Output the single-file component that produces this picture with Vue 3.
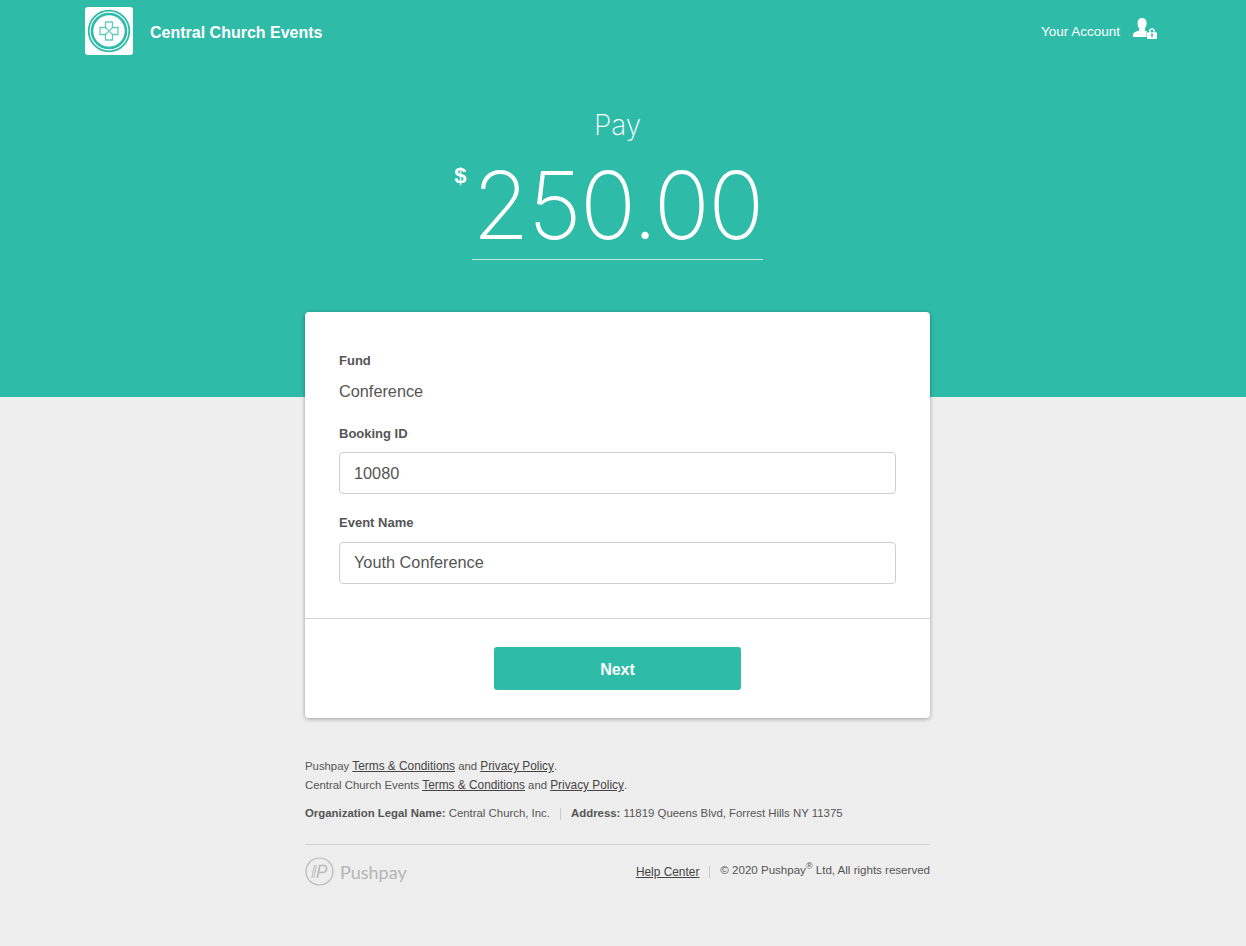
<script setup>
const fields = [
  { label: 'Booking ID', value: '10080' },
  { label: 'Event Name', value: 'Youth Conference' },
]
</script>

<template>
  <div class="page">
    <section class="hero">
      <header class="topbar">
        <div class="brand">
          <div class="logo">
            <svg width="48" height="48" viewBox="0 0 48 48" fill="none" stroke="#2ebba8">
              <circle cx="24" cy="24" r="20.3" stroke-width="1.8" />
              <circle cx="24" cy="24" r="17" stroke-width="2.6" />
              <path stroke-width="1.3" stroke-opacity="0.75" d="M20.5 15 h7 v5.5 h5.5 v7 h-5.5 v5.5 h-7 v-5.5 h-5.5 v-7 h5.5 z" />
              <path stroke-width="1.1" stroke-opacity="0.75" d="M20.5 20.5 L27.5 27.5 M27.5 20.5 L20.5 27.5" />
            </svg>
          </div>
          <span class="brand-name">Central Church Events</span>
        </div>
        <div class="account">
          <span class="account-text">Your Account</span>
          <svg width="24" height="21" viewBox="0 0 24 21" fill="#fff">
            <path d="M9 0 C12 0 13.6 2.2 13.6 5.2 C13.6 7.6 12.8 9.4 11.8 10.6 L12 12.4 C12.8 12.8 13.4 13.1 14 13.4 L13.6 14.4 L13.6 19 L0 19 L0 16 C0.4 14.4 3.4 13.4 6.2 12.4 L6.4 10.6 C5.2 9.4 4.6 7.6 4.6 5.2 C4.6 2.2 6 0 9 0 Z" />
            <path d="M16 14.2 V13 C16 9.2 22 9.2 22 13 V14.2 H23 Q24 14.2 24 15.2 V20 Q24 21 23 21 H15 Q14 21 14 20 V15.2 Q14 14.2 15 14.2 Z M17.5 14.2 H20.5 V13 C20.5 11.2 17.5 11.2 17.5 13 Z M19 15.6 A1.1 1.1 0 0 0 18.4 17.6 V19.2 H19.6 V17.6 A1.1 1.1 0 0 0 19 15.6 Z" fill-rule="evenodd" />
          </svg>
        </div>
      </header>
      <h1 class="pay">Pay</h1>
      <div class="amount">
        <span class="currency">$</span>
        <span class="figure">250.00</span>
      </div>
    </section>

    <div class="below">
      <main class="column">
        <form class="card" @submit.prevent>
          <div class="card-body">
            <div class="label">Fund</div>
            <div class="static">Conference</div>
            <div v-for="field in fields" :key="field.label" class="field">
              <label class="label">{{ field.label }}</label>
              <input class="input" type="text" :value="field.value" />
            </div>
          </div>
          <div class="card-foot">
            <button class="next" type="submit">Next</button>
          </div>
        </form>

        <footer class="footer">
          <p class="line">Pushpay <a href="#">Terms &amp; Conditions</a> and <a href="#">Privacy Policy</a>.</p>
          <p class="line">Central Church Events <a href="#">Terms &amp; Conditions</a> and <a href="#">Privacy Policy</a>.</p>
          <p class="legal">
            <span><b>Organization Legal Name:</b> Central Church, Inc.</span>
            <i class="sep"></i>
            <span><b>Address:</b> 11819 Queens Blvd, Forrest Hills NY 11375</span>
          </p>
          <div class="bottom">
            <div class="push-logo">
              <svg width="29" height="29" viewBox="0 0 29 29" fill="none" stroke="#b9b9b9">
                <circle cx="14.5" cy="14.5" r="13.5" stroke-width="1.2" />
                <path stroke-width="1" d="M9.5 8 L6.8 21 M11.5 8 L8.8 21" />
                <path stroke-width="1.7" d="M12.2 21 L14.8 8.5 H18.5 C23 8.5 22.5 15.5 17.5 15.5 H13.6" />
              </svg>
              <span>Pushpay</span>
            </div>
            <div class="rights">
              <a href="#" class="help">Help Center</a>
              <i class="sep"></i>
              <span class="copyright">© 2020 Pushpay<sup>®</sup> Ltd, All rights reserved</span>
            </div>
          </div>
        </footer>
      </main>
    </div>
  </div>
</template>

<style>
html, body { margin: 0; background: #eeeeee; }
</style>

<style scoped>
.page {
  min-height: 946px;
  background: #eeeeee;
  font-family: "Liberation Sans", Arial, sans-serif;
  color: #555;
}
.hero {
  box-sizing: border-box;
  height: 397px;
  padding-right: 11px;
  background: #2ebba8;
  color: #fff;
  display: flex;
  flex-direction: column;
  align-items: center;
}
.topbar {
  box-sizing: border-box;
  width: 100%;
  padding: 7px 78px 0 85px;
  display: flex;
  justify-content: space-between;
  align-items: flex-start;
}
.brand { display: flex; align-items: center; gap: 17px; }
.logo {
  width: 48px;
  height: 48px;
  background: #fff;
  border-radius: 3px;
  display: flex;
}
.brand-name { font-size: 16px; font-weight: 700; padding-top: 3px; }
.account {
  display: flex;
  align-items: flex-start;
  gap: 12px;
  font-size: 13.5px;
  padding-top: 11px;
}
.account-text { line-height: 16px; margin-top: 6px; margin-right: 1px; }
.pay {
  margin: 51px 0 0;
  font-family: Inter, sans-serif;
  font-weight: 200;
  font-size: 28px;
  line-height: 38px;
}
.amount {
  position: relative;
  margin-top: 18px;
  border-bottom: 1px solid rgba(255, 255, 255, 0.7);
  height: 97px;
}
.currency {
  position: absolute;
  left: -18px;
  top: 2px;
  font-size: 22px;
  font-weight: 700;
  line-height: 24px;
}
.figure {
  display: block;
  font-family: Inter, sans-serif;
  font-weight: 250;
  font-size: 93px;
  letter-spacing: -1.7px;
  line-height: 80px;
  padding-top: 3px;
}
.below { padding-right: 11px; }
.column {
  width: 625px;
  margin: -85px auto 0;
  position: relative;
}
.card {
  background: #fff;
  border-radius: 4px;
  box-shadow: 0 1px 4px rgba(0, 0, 0, 0.35);
}
.card-body {
  padding: 41px 34px 34px;
  border-bottom: 1px solid #d4d4d4;
}
.label {
  display: block;
  font-size: 13px;
  font-weight: 700;
  line-height: 16px;
  color: #555;
}
.static {
  font-size: 16.3px;
  line-height: 20px;
  margin-top: 12px;
}
.field { margin-top: 25px; }
.field + .field { margin-top: 21px; }
.field .label { margin-bottom: 10px; }
.field + .field .label { margin-bottom: 11px; }
.input {
  box-sizing: border-box;
  display: block;
  width: 100%;
  height: 42px;
  padding: 0 14px;
  border: 1px solid #cfcfcf;
  border-radius: 4px;
  font: 16.3px "Liberation Sans", Arial, sans-serif;
  color: #555;
  background: #fff;
  outline: none;
}
.field + .field .input { padding-bottom: 2px; }
.card-foot {
  display: flex;
  justify-content: center;
  padding: 28px 0;
}
.next {
  width: 247px;
  height: 43px;
  padding: 2px 0 0;
  border: 0;
  border-radius: 3px;
  background: #2ebba8;
  color: #fff;
  font: 700 16px "Liberation Sans", Arial, sans-serif;
}
.footer {
  font-size: 11.35px;
  color: #555;
  padding-top: 39px;
}
.footer a { color: #444; font-size: 11.85px; text-decoration: underline; }
.line { margin: 0; line-height: 19px; }
.legal {
  margin: 9px 0 0;
  font-size: 11.4px;
  line-height: 19px;
  display: flex;
  align-items: center;
  gap: 10px;
  padding-bottom: 21px;
  border-bottom: 1px solid #d4d4d4;
}
.sep {
  width: 1px;
  height: 12px;
  background: #c8c8c8;
}
.bottom {
  display: flex;
  justify-content: space-between;
  align-items: center;
  padding-top: 12px;
}
.push-logo {
  display: flex;
  align-items: center;
  gap: 6px;
  font-family: Lato, sans-serif;
  font-size: 18px;
  color: #b5b5b5;
}
.rights { display: flex; align-items: center; gap: 10px; font-size: 11.55px; }
.rights sup { font-size: 9px; line-height: 0; }
.copyright { margin-bottom: 3px; }
.footer .help { font-size: 11.9px; }
</style>
